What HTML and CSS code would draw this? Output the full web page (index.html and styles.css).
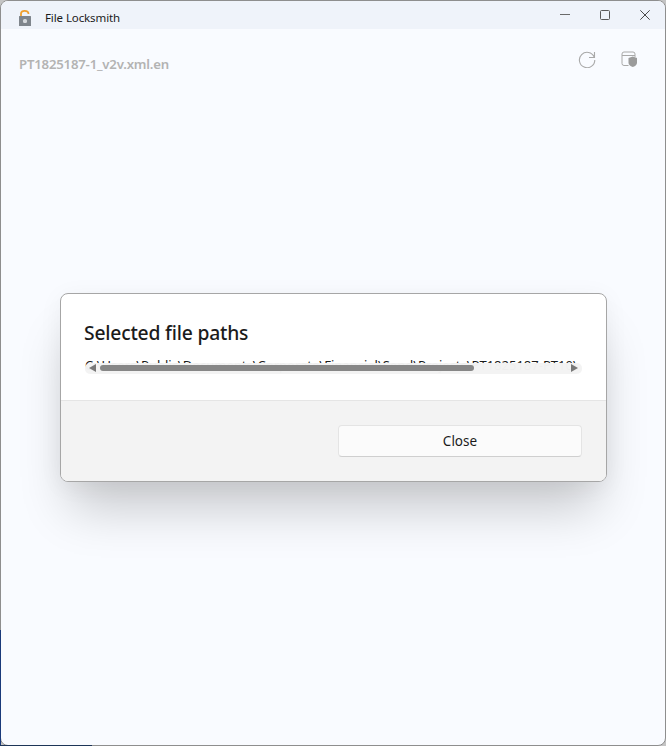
FILE: index.html
```html
<!DOCTYPE html>
<html lang="en">
<head>
  <meta charset="UTF-8" />
  <meta name="viewport" content="width=device-width, initial-scale=1.0" />
  <title>File Locksmith</title>
  <link rel="stylesheet" href="styles.css">
</head>
<body>
  <div class="window">
    <div class="titlebar">
      <svg class="app-icon" width="14" height="18" viewBox="0 0 14 18">
        <path d="M3 8V4.600C3 2.600 4.500 1.900 6.500 1.900S10.500 2.800 10.500 5" fill="none" stroke="#f0a030" stroke-width="1.800"/>
        <rect x="1" y="7" width="12" height="10" rx="0.500" fill="#7f858c"/>
        <rect x="5" y="10" width="4" height="4" rx="1.500" fill="#d5d8dc"/>
      </svg>
      <span class="app-name">File Locksmith</span>
      <div class="caption-buttons">
        <svg width="10" height="10" viewBox="0 0 10 10"><path d="M0 4.500H10" stroke="#6a6a6a"/></svg>
        <svg width="10" height="10" viewBox="0 0 10 10"><rect x="0.500" y="0.500" width="9" height="9" rx="1" fill="none" stroke="#5a5a5a"/></svg>
        <svg width="10" height="10" viewBox="0 0 10 10"><path d="M0.300 0.300L9.700 9.700M9.700 0.300L0.300 9.700" stroke="#4a4a4a"/></svg>
      </div>
    </div>
    <div class="content">
      <div class="toolbar">
        <span class="file-name">PT1825187-1_v2v.xml.en</span>
        <div class="tools">
          <svg width="18" height="18" viewBox="0 0 18 18">
            <path d="M16.500 2V7.500H11M16.200 7A7.700 7.700 0 1 0 16.800 10" fill="none" stroke="#a9a9a9" stroke-width="1.100"/>
          </svg>
          <svg width="17" height="16" viewBox="0 0 17 16">
            <path d="M7.500 14.500H3A2 2 0 0 1 1 12.500V3A2 2 0 0 1 3 1H12A2 2 0 0 1 14 3V6M1 4.500H14" fill="none" stroke="#a9a9a9"/>
            <path d="M11.800 5.500L16 7V11.500C16 13.500 14.500 15 11.800 16C9 15 7.500 13.500 7.500 11.500V7Z" fill="#9b9b9b"/>
          </svg>
        </div>
      </div>
      <div class="overlay">
        <div class="dialog">
          <div class="dialog-body">
            <h2>Selected file paths</h2>
            <div class="path-box">
              <div class="path-text">C:\Users\Public\Documents\Corporate\Financial\Send\Projects\PT1825187-PT10\</div>
              <div class="scrollbar">
                <span class="arrow-left"></span>
                <span class="thumb"></span>
                <span class="arrow-right"></span>
              </div>
            </div>
          </div>
          <div class="dialog-footer">
            <button class="close-btn">Close</button>
          </div>
        </div>
      </div>
    </div>
  </div>
  <span class="edge-left"></span>
  <span class="edge-bottom"></span>
</body>
</html>
```

FILE: styles.css
```css
html, body {
  margin: 0;
  height: 100%;
}
body {
  font-family: "Noto Sans", "Open Sans", sans-serif;
  background-color: #c4c4c4;
  overflow: hidden;
}
.window {
  box-sizing: border-box;
  position: relative;
  height: 746px;
  display: flex;
  flex-direction: column;
  border: 1px solid #8e8e8e;
  border-radius: 8px;
  overflow: hidden;
  background: #f9fbff;
}
.titlebar {
  box-sizing: border-box;
  height: 28px;
  flex: none;
  display: flex;
  align-items: center;
  background: #eff3fa;
  padding: 5px 0 0 17px;
}
.app-name {
  margin-left: 13px;
  font-size: 11.500px;
  color: #1b1b1b;
  letter-spacing: -0.1px;
}
.caption-buttons {
  align-self: flex-start;
  margin: 4px 15px 0 auto;
  display: flex;
  gap: 30px;
}
.content {
  flex: 1;
  position: relative;
}
.toolbar {
  display: flex;
  justify-content: space-between;
  padding: 18px 27px 0 18px;
}
.file-name {
  margin-top: 7px;
  font-size: 13.200px;
  font-weight: 600;
  line-height: 20px;
  color: #b3b3b3;
  letter-spacing: -0.2px;
}
.tools {
  display: flex;
  align-items: center;
  gap: 25px;
  height: 24px;
}
.overlay {
  position: absolute;
  inset: 0;
  padding-left: 1px;
  display: flex;
  align-items: center;
  justify-content: center;
}
.dialog {
  box-sizing: border-box;
  width: 547px;
  height: 189px;
  display: flex;
  flex-direction: column;
  background: #fff;
  border: 1px solid #a6a6a6;
  border-radius: 8px;
  overflow: hidden;
  box-shadow: 0 36px 48px -10px rgba(0, 0, 0, 0.2), 0 4px 24px rgba(0, 0, 0, 0.05);
}
.dialog-body {
  height: 106px;
  flex: none;
  padding: 0 24px;
}
.dialog-body h2 {
  margin: 26px 0 0 -1px;
  font-size: 19.300px;
  font-weight: 500;
  line-height: 26px;
  color: #1b1b1b;
  letter-spacing: -0.2px;
}
.path-box {
  position: relative;
  height: 14px;
  margin-top: 14px;
  overflow: hidden;
}
.path-text {
  margin-top: -3px;
  font-size: 13px;
  line-height: 16px;
  white-space: nowrap;
  color: #1b1b1b;
}
.scrollbar {
  position: absolute;
  left: 0;
  right: 0;
  top: 3px;
  height: 11px;
  display: flex;
  align-items: center;
  background: rgba(243, 243, 243, 0.98);
  border-radius: 5px;
}
.arrow-left {
  width: 0;
  height: 0;
  margin-left: 4px;
  border: 4px solid transparent;
  border-left-width: 0;
  border-right: 7px solid #787878;
}
.thumb {
  width: 374px;
  height: 6px;
  margin-left: 4px;
  background: #878787;
  border-radius: 3px;
}
.arrow-right {
  width: 0;
  height: 0;
  margin-left: auto;
  margin-right: 4px;
  border: 4px solid transparent;
  border-right-width: 0;
  border-left: 7px solid #787878;
}
.dialog-footer {
  flex: 1;
  display: flex;
  justify-content: flex-end;
  align-items: flex-start;
  background: #f3f3f3;
  border-top: 1px solid #e5e5e5;
  padding: 24px 24px 0;
}
.close-btn {
  box-sizing: border-box;
  width: 244px;
  height: 32px;
  font: inherit;
  font-size: 13.500px;
  color: #1b1b1b;
  background: #fbfbfb;
  border: 1px solid #e4e4e4;
  border-bottom-color: #cfcfcf;
  border-radius: 4px;
}
.edge-left {
  position: absolute;
  left: 0;
  top: 630px;
  bottom: 0;
  width: 1px;
  background: #1a3a7a;
}
.edge-bottom {
  position: absolute;
  left: 0;
  bottom: 0;
  width: 92px;
  height: 1px;
  background: #1d3557;
}
```
